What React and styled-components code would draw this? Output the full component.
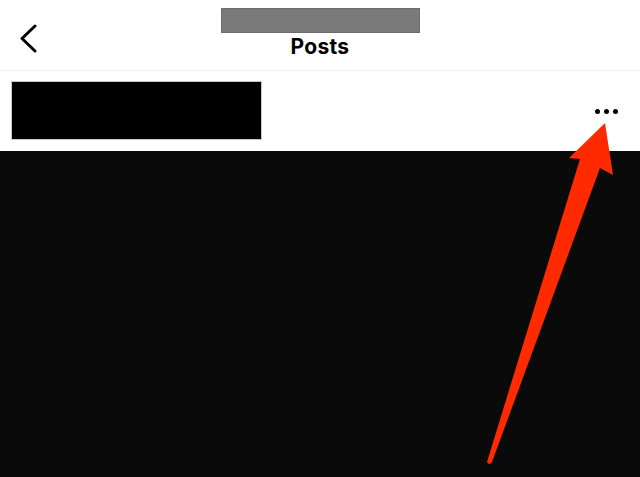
import React from "react";
import styled, { createGlobalStyle } from "styled-components";

const GlobalStyle = createGlobalStyle`
  html, body {
    margin: 0;
    padding: 0;
    background: #fff;
  }
  body {
    font-family: Inter, "Liberation Sans", Arial, sans-serif;
  }
`;

const Screen = styled.div`
  position: relative;
  width: 640px;
  height: 477px;
  overflow: hidden;
  display: flex;
  flex-direction: column;
  background: #fff;
`;

const Header = styled.header`
  height: 70px;
  border-bottom: 1px solid #efefef;
  display: grid;
  grid-template-columns: 60px 1fr 60px;
  align-items: start;
`;

const BackButton = styled.button`
  border: 0;
  background: none;
  padding: 0;
  margin: 23px 0 0 16px;
  width: 24px;
  height: 32px;
  display: flex;
  align-items: center;
  justify-content: center;

  svg {
    display: block;
  }
`;

const TitleBlock = styled.div`
  display: flex;
  flex-direction: column;
  align-items: center;
  padding-top: 8px;
`;

const AccountName = styled.div`
  width: 197px;
  height: 23px;
  background: #7a7a7a;
  border: 1px solid #6c6c6c;
`;

const Title = styled.h1`
  margin: 1px 0 0;
  font-size: 21px;
  line-height: 26px;
  font-weight: 700;
  color: #000;
  letter-spacing: 0.3px;
`;

const PostHead = styled.div`
  height: 80px;
  display: flex;
  align-items: center;
  justify-content: space-between;
  padding: 0 22px 0 11px;
`;

const Author = styled.div`
  width: 249px;
  height: 57px;
  margin-top: -2px;
  background: #000;
  border: 1px solid #c8c8c8;
`;

const MoreButton = styled.button`
  border: 0;
  background: none;
  padding: 0;
  margin-top: 0;
  display: flex;
  gap: 4px;
`;

const Dot = styled.span`
  width: 5px;
  height: 5px;
  border-radius: 50%;
  background: #000;
`;

const Media = styled.div`
  flex: 1;
  background: #0a0a0a;
`;

const Pointer = styled.svg`
  position: absolute;
  left: 0;
  top: 0;
  pointer-events: none;
`;

export default function App() {
  return (
    <>
      <GlobalStyle />
      <Screen>
        <Header>
          <BackButton aria-label="Back">
            <svg width="20" height="30" viewBox="0 0 20 30">
              <path
                d="M17 2 L4 14.5 L17 27"
                fill="none"
                stroke="#000"
                strokeWidth="3"
                strokeLinecap="round"
                strokeLinejoin="round"
              />
            </svg>
          </BackButton>
          <TitleBlock>
            <AccountName />
            <Title>Posts</Title>
          </TitleBlock>
          <div />
        </Header>
        <PostHead>
          <Author />
          <MoreButton aria-label="More">
            <Dot />
            <Dot />
            <Dot />
          </MoreButton>
        </PostHead>
        <Media />
        <Pointer width="640" height="477" viewBox="0 0 640 477">
          <path
            d="M605 123 L613 175 L600 168 L492 462 Q489 466 487 462 L580 159 L569 158 Z"
            fill="#ff2a00"
          />
        </Pointer>
      </Screen>
    </>
  );
}
